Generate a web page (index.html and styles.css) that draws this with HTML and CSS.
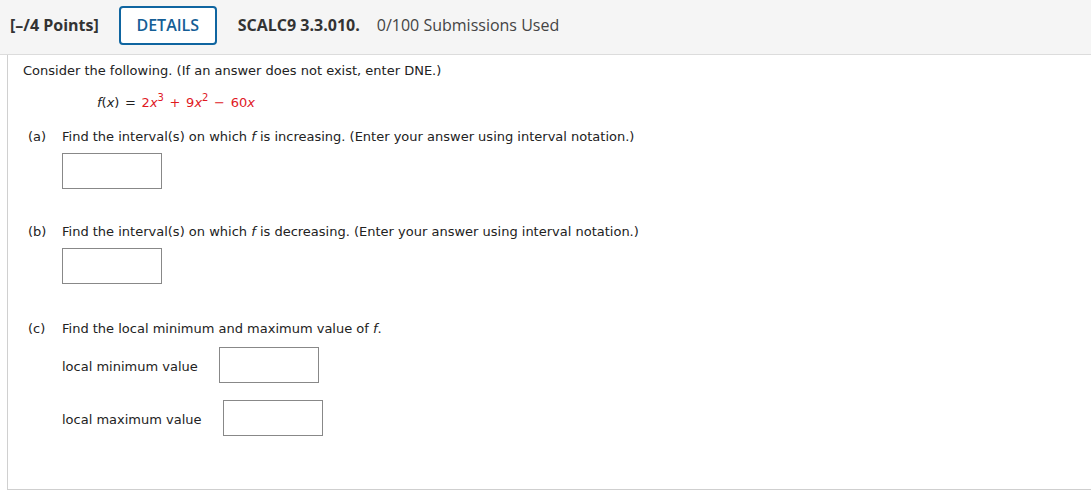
FILE: index.html
```html
<!DOCTYPE html>
<html>
<head>
<meta charset="utf-8">
<link rel="stylesheet" href="styles.css">
</head>
<body>
<div class="header">
  <span class="points">[–/4 Points]</span>
  <span class="details">DETAILS</span>
  <span class="code">SCALC9 3.3.010.</span>
  <span class="subs">0/100 Submissions Used</span>
</div>
<div class="question">
  <p class="intro">Consider the following. (If an answer does not exist, enter DNE.)</p>
  <p class="formula"><i>f</i>(<i>x</i>) = <span class="red">2<i>x</i><sup>3</sup> + 9<i>x</i><sup>2</sup> − 60<i>x</i></span></p>

  <div class="part">
    <span class="lbl">(a)</span>
    <span>Find the interval(s) on which <i>f</i> is increasing. (Enter your answer using interval notation.)</span>
  </div>
  <div class="answer"><span class="box"></span></div>

  <div class="part gap">
    <span class="lbl">(b)</span>
    <span>Find the interval(s) on which <i>f</i> is decreasing. (Enter your answer using interval notation.)</span>
  </div>
  <div class="answer"><span class="box"></span></div>

  <div class="part gap c">
    <span class="lbl">(c)</span>
    <span>Find the local minimum and maximum value of <i>f</i>.</span>
  </div>
  <div class="row first"><span>local minimum value</span><span class="box"></span></div>
  <div class="row second"><span>local maximum value</span><span class="box"></span></div>
</div>
</body>
</html>
```
FILE: styles.css
```css
html, body {
  margin: 0;
  padding: 0;
  background: #fff;
}
.header {
  display: flex;
  align-items: center;
  height: 50px;
  padding: 0 0 4px 10px;
  background: #f5f5f5;
  border-bottom: 1px solid #dcdcdc;
  font-family: "Open Sans", "Noto Sans", sans-serif;
  font-size: 16px;
  color: #333;
}
.points {
  font-weight: 700;
}
.details {
  display: flex;
  align-items: center;
  justify-content: center;
  box-sizing: border-box;
  width: 98px;
  height: 39px;
  margin-left: 20px;
  border: 2px solid #0f65a0;
  border-radius: 4px;
  color: #155e96;
  font-weight: 600;
  background: #fff;
}
.code {
  margin-left: 21px;
  font-weight: 700;
}
.subs {
  margin-left: 17px;
  color: #444;
}
.question {
  margin-left: 7px;
  height: 435px;
  box-sizing: border-box;
  border-left: 1px solid #d0d0d0;
  border-bottom: 1px solid #cfcfcf;
  padding: 8px 0 0 15px;
  font-family: "DejaVu Sans", Verdana, sans-serif;
  font-size: 13px;
  line-height: 16px;
  color: #222;
}
.question p {
  margin: 0;
}
.formula {
  margin-top: 16px !important;
  padding-left: 74px;
  word-spacing: 1.5px;
}
.formula sup {
  font-size: 10px;
  line-height: 0;
  vertical-align: 6px;
}
.red {
  color: #e0191f;
}
.part {
  display: flex;
  margin-top: 18px;
  padding-left: 5px;
}
.part.gap {
  margin-top: 35px;
}
.part.gap.c {
  margin-top: 37px;
}
.lbl {
  width: 34px;
}
.answer {
  margin-top: 8px;
  padding-left: 39px;
  height: 36px;
}
.box {
  display: inline-block;
  box-sizing: border-box;
  width: 100px;
  height: 36px;
  border: 1px solid #888;
  background: #fff;
}
.row {
  display: flex;
  align-items: center;
  padding-left: 39px;
}
.row > span:first-child {
  position: relative;
  top: 2px;
}
.row .box {
  margin-left: 21px;
}
.row.first {
  margin-top: 10px;
}
.row.second {
  margin-top: 17px;
}
```
